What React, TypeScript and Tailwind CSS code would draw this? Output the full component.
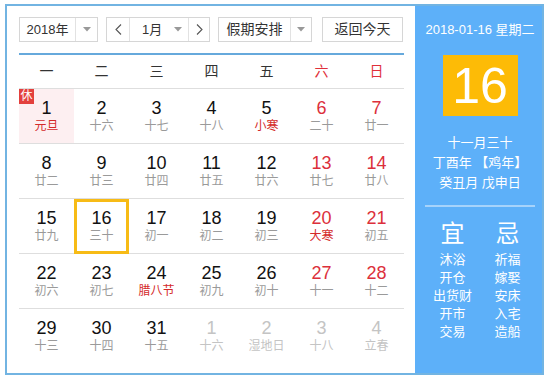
import React from "react";

type Day = { n: number; l: string; red?: boolean; lred?: boolean; grey?: boolean; sel?: boolean; rest?: boolean };

const rows: Day[][] = [
  [
    { n: 1, l: "元旦", lred: true, rest: true },
    { n: 2, l: "十六" },
    { n: 3, l: "十七" },
    { n: 4, l: "十八" },
    { n: 5, l: "小寒", lred: true },
    { n: 6, l: "二十", red: true },
    { n: 7, l: "廿一", red: true },
  ],
  [
    { n: 8, l: "廿二" },
    { n: 9, l: "廿三" },
    { n: 10, l: "廿四" },
    { n: 11, l: "廿五" },
    { n: 12, l: "廿六" },
    { n: 13, l: "廿七", red: true },
    { n: 14, l: "廿八", red: true },
  ],
  [
    { n: 15, l: "廿九" },
    { n: 16, l: "三十", sel: true },
    { n: 17, l: "初一" },
    { n: 18, l: "初二" },
    { n: 19, l: "初三" },
    { n: 20, l: "大寒", red: true, lred: true },
    { n: 21, l: "初五", red: true },
  ],
  [
    { n: 22, l: "初六" },
    { n: 23, l: "初七" },
    { n: 24, l: "腊八节", lred: true },
    { n: 25, l: "初九" },
    { n: 26, l: "初十" },
    { n: 27, l: "十一", red: true },
    { n: 28, l: "十二", red: true },
  ],
  [
    { n: 29, l: "十三" },
    { n: 30, l: "十四" },
    { n: 31, l: "十五" },
    { n: 1, l: "十六", grey: true },
    { n: 2, l: "湿地日", grey: true },
    { n: 3, l: "十八", grey: true },
    { n: 4, l: "立春", grey: true },
  ],
];

const weekdays = ["一", "二", "三", "四", "五", "六", "日"];

function Caret() {
  return (
    <svg width="8" height="5" viewBox="0 0 8 5">
      <path d="M0 0 L8 0 L4 4.5 Z" fill="#999" />
    </svg>
  );
}

function Chevron({ dir }: { dir: "l" | "r" }) {
  return (
    <svg width="7" height="11" viewBox="0 0 7 11">
      <path
        d={dir === "l" ? "M6 0.5 L1 5.5 L6 10.5" : "M1 0.5 L6 5.5 L1 10.5"}
        fill="none"
        stroke="#555"
        strokeWidth="1.1"
      />
    </svg>
  );
}

export default function App() {
  const font = { fontFamily: '"Liberation Sans", "Noto Sans CJK SC", sans-serif' };
  return (
    <div className="w-[547px] h-[377px] bg-white overflow-hidden" style={font}>
      <div className="ml-[5px] mt-[4px] w-[539px] h-[371px] border-2 border-[#72b4e2] flex">
        {/* left */}
        <div className="w-[408px] pl-[12px] pr-[11px] pt-[11px]">
          <div className="flex h-[25px] text-[13px] text-[#333]">
            <div className="w-[79px] border border-[#d6d6d6] flex">
              <div className="w-[55px] flex items-center justify-center">2018年</div>
              <div className="flex-1 border-l border-[#e2e2e2] flex items-center justify-center">
                <Caret />
              </div>
            </div>
            <div className="ml-[8px] w-[104px] border border-[#d6d6d6] flex">
              <div className="w-[22px] flex items-center justify-center">
                <Chevron dir="l" />
              </div>
              <div className="w-[60px] border-l border-r border-[#e2e2e2] flex items-center">
                <span className="ml-[12px] w-[32px]">1月</span>
                <Caret />
              </div>
              <div className="flex-1 flex items-center justify-center">
                <Chevron dir="r" />
              </div>
            </div>
            <div className="ml-[8px] w-[94px] border border-[#d6d6d6] flex">
              <div className="w-[71px] flex items-center justify-center text-[14px]">假期安排</div>
              <div className="flex-1 border-l border-[#e2e2e2] flex items-center justify-center">
                <Caret />
              </div>
            </div>
            <div className="ml-[10px] w-[81px] border border-[#d6d6d6] flex items-center justify-center text-[14px]">
              返回今天
            </div>
          </div>
          <div className="mt-[11px] h-[2px] bg-[#66a9dc]" />
          <div className="grid grid-cols-7 h-[34px] border-b border-[#dedede] text-[14px]">
            {weekdays.map((w, i) => (
              <div
                key={w}
                className={`flex items-center justify-center ${i >= 5 ? "text-[#e0303a]" : "text-[#333]"}`}
              >
                {w}
              </div>
            ))}
          </div>
          {rows.map((r, ri) => (
            <div
              key={ri}
              className={`grid grid-cols-7 h-[55px] ${ri < 4 ? "border-b border-[#dedede]" : ""}`}
            >
              {r.map((d, di) => (
                <div
                  key={di}
                  className={`relative flex flex-col items-center pt-[9px] ${d.rest ? "bg-[#fdeff1]" : ""}`}
                >
                  {d.rest && (
                    <div className="absolute left-0 top-0 w-[15px] h-[15px] bg-[#e3403d] text-white text-[12px] leading-[15px] text-center">
                      休
                    </div>
                  )}
                  {d.sel && (
                    <div className="absolute left-0 top-0 w-[55px] h-[55px] border-[3px] border-[#f7bb16]" />
                  )}
                  <div
                    className={`text-[18px] leading-[20px] ${
                      d.grey ? "text-[#c4c4c4]" : d.red ? "text-[#dc2f3b]" : "text-[#111]"
                    }`}
                  >
                    {d.n}
                  </div>
                  <div
                    className={`text-[12px] leading-[16px] ${
                      d.grey ? "text-[#c4c4c4]" : d.lred ? "text-[#d42a2a]" : "text-[#9a9a9a]"
                    }`}
                  >
                    {d.l}
                  </div>
                </div>
              ))}
            </div>
          ))}
        </div>
        {/* right */}
        <div className="flex-1 pl-[3px] bg-[#5db0f9] flex flex-col items-center text-white">
          <div className="mt-[16px] text-[13px] leading-[16px]">2018-01-16 星期二</div>
          <div className="mt-[17px] w-[75px] h-[61px] bg-[#fdbb06] flex items-center justify-center text-[50px] leading-none">
            16
          </div>
          <div className="mt-[17px] text-[13px] leading-[20px] text-center">
            <div>十一月三十</div>
            <div>丁酉年 【鸡年】</div>
            <div>癸丑月 戊申日</div>
          </div>
          <div className="mt-[12px] w-[110px] h-[2px] bg-[#a6d3fb]" />
          <div className="mt-[12px] flex text-[13px] leading-[18px]">
            <div className="w-[55px] flex flex-col items-center">
              <div className="text-[24px] leading-[30px] mb-[2px]">宜</div>
              <div>沐浴</div>
              <div>开仓</div>
              <div>出货财</div>
              <div>开市</div>
              <div>交易</div>
            </div>
            <div className="w-[55px] flex flex-col items-center">
              <div className="text-[24px] leading-[30px] mb-[2px]">忌</div>
              <div>祈福</div>
              <div>嫁娶</div>
              <div>安床</div>
              <div>入宅</div>
              <div>造船</div>
            </div>
          </div>
        </div>
      </div>
    </div>
  );
}
